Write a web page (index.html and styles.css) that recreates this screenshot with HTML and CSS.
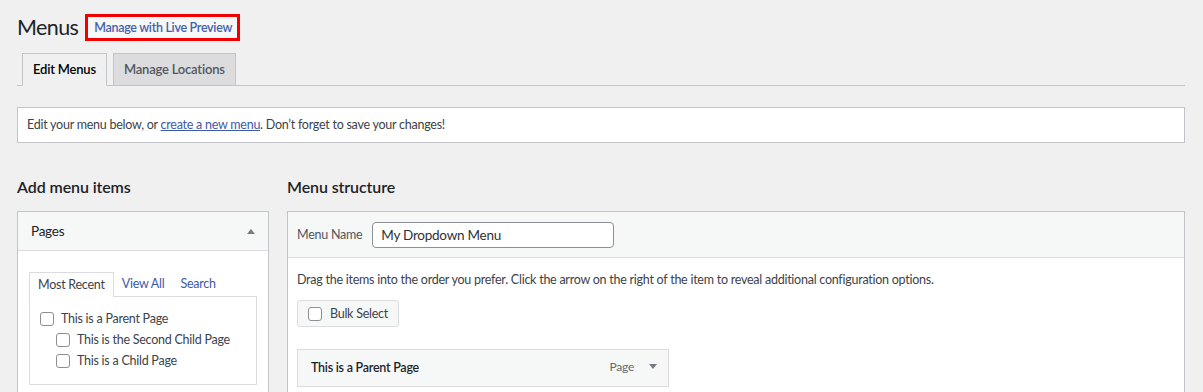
FILE: index.html
```html
<!DOCTYPE html>
<html lang="en">
<head>
<meta charset="utf-8">
<title>Menus</title>
<link rel="stylesheet" href="styles.css">
</head>
<body>
<div class="wrap">
  <div class="title-row">
    <h1 class="page-title">Menus</h1>
    <span class="highlight"><a class="title-action" href="#">Manage with Live Preview</a></span>
  </div>

  <nav class="nav-tabs">
    <a class="nav-tab active" href="#">Edit Menus</a>
    <a class="nav-tab" href="#">Manage Locations</a>
  </nav>

  <div class="notice">Edit your menu below, or <a href="#">create a new menu</a>. Don’t forget to save your changes!</div>

  <div class="columns">
    <section class="col-left">
      <h2 class="col-title">Add menu items</h2>
      <div class="box">
        <div class="box-head">
          <span>Pages</span>
          <span class="tri-up"></span>
        </div>
        <div class="box-body">
          <div class="mini-tabs">
            <span class="mini-tab active">Most Recent</span>
            <a class="mini-tab" href="#">View All</a>
            <a class="mini-tab" href="#">Search</a>
          </div>
          <div class="mini-panel">
            <label class="check-row"><span class="cb"></span>This is a Parent Page</label>
            <label class="check-row child"><span class="cb"></span>This is the Second Child Page</label>
            <label class="check-row child"><span class="cb"></span>This is a Child Page</label>
          </div>
        </div>
      </div>
    </section>

    <section class="col-right">
      <h2 class="col-title">Menu structure</h2>
      <div class="box">
        <div class="menu-head">
          <span class="menu-label">Menu Name</span>
          <span class="text-input">My Dropdown Menu</span>
        </div>
        <div class="menu-body">
          <p class="hint">Drag the items into the order you prefer. Click the arrow on the right of the item to reveal additional configuration options.</p>
          <span class="bulk-btn"><span class="cb"></span>Bulk Select</span>
          <div class="menu-item">
            <span class="item-title">This is a Parent Page</span>
            <span class="item-meta">Page <span class="tri-down"></span></span>
          </div>
        </div>
      </div>
    </section>
  </div>
</div>
</body>
</html>
```

FILE: styles.css
```css
* { box-sizing: border-box; }

html, body {
  margin: 0;
  padding: 0;
  background: #f0f0f1;
}

body {
  font-family: "Segoe UI", Lato, "Liberation Sans", sans-serif;
  font-size: 12.5px;
  letter-spacing: -0.25px;
  line-height: 18px;
  color: #3c434a;
  height: 392px;
  overflow: hidden;
}

a { color: #3d5aa6; }

.wrap {
  padding: 14px 18px 0 17px;
}

.title-row {
  display: flex;
  align-items: center;
  gap: 7px;
  height: 27px;
}

.page-title {
  margin: 0;
  font-size: 21.5px;
  letter-spacing: -0.6px;
  font-weight: 400;
  line-height: 27px;
  color: #1d2327;
}

.highlight {
  display: flex;
  border: 3px solid #f20000;
  height: 27px;
}

.title-action {
  display: block;
  background: #f6f7f7;
  padding: 0 5px 0 6px;
  font-size: 12.5px;
  letter-spacing: -0.3px;
  font-weight: 600;
  line-height: 21px;
  text-decoration: none;
  color: #4560ab;
}

.nav-tabs {
  display: flex;
  margin-top: 12px;
  border-bottom: 1px solid #c3c4c7;
  padding-left: 5px;
  gap: 6px;
  height: 33px;
}

.nav-tab {
  display: block;
  padding: 5px 10px 5px;
  font-size: 13px;
  letter-spacing: -0.2px;
  font-weight: 600;
  line-height: 20px;
  border: 1px solid #c3c4c7;
  background: #dcdcde;
  color: #50575e;
  text-decoration: none;
  height: 33px;
}

.nav-tab.active {
  background: #f0f0f1;
  color: #000;
  border-bottom-color: #f0f0f1;
}

.notice {
  margin-top: 21px;
  background: #fff;
  border: 1px solid #c3c4c7;
  padding: 8px 9px;
  height: 36px;
}

.columns {
  display: flex;
  gap: 18px;
  margin-top: 32px;
}

.col-left { width: 252px; flex: none; }
.col-right { flex: 1; }

.col-title {
  margin: 0 0 12px;
  font-size: 16px;
  letter-spacing: -0.1px;
  font-weight: 600;
  line-height: 24px;
  color: #1d2327;
}

.box {
  background: #fff;
  border: 1px solid #c3c4c7;
}

.box-head {
  display: flex;
  justify-content: space-between;
  align-items: center;
  background: #f6f7f7;
  border-bottom: 1px solid #dcdcde;
  height: 39px;
  padding: 0 13px 0 13px;
  font-size: 13.5px;
  color: #1d2327;
}

.tri-up {
  width: 0;
  height: 0;
  border-left: 4px solid transparent;
  border-right: 4px solid transparent;
  border-bottom: 5px solid #787c82;
}

.box-body {
  padding: 21px 11px 30px;
}

.mini-tabs {
  display: flex;
  align-items: flex-end;
  height: 24px;
}

.mini-tab {
  display: block;
  padding: 2px 8px 3px 8px;
  line-height: 19px;
  text-decoration: none;
  color: #3d5aa6;
}

.mini-tab.active {
  background: #fff;
  border: 1px solid #dcdcde;
  border-bottom: 0;
  color: #3c434a;
  height: 25px;
  position: relative;
  z-index: 1;
  margin-bottom: -1px;
}

.mini-panel {
  border: 1px solid #dcdcde;
  padding: 11px 10px 13px;
  display: flex;
  flex-direction: column;
}

.check-row {
  display: flex;
  align-items: center;
  gap: 7px;
  height: 21px;
  color: #3c434a;
}

.check-row.child { padding-left: 16px; }

.cb {
  display: inline-block;
  width: 14px;
  height: 14px;
  border: 1px solid #8c8f94;
  border-radius: 3px;
  background: #fff;
  flex: none;
}

.menu-head {
  display: flex;
  align-items: center;
  gap: 10px;
  background: #f6f7f7;
  border-bottom: 1px solid #dcdcde;
  height: 46px;
  padding: 0 9px;
}

.menu-label { color: #50575e; }

.text-input {
  display: flex;
  align-items: center;
  width: 242px;
  height: 26px;
  border: 1px solid #8c8f94;
  border-radius: 4px;
  background: #fff;
  padding: 0 8px;
  font-size: 13.5px;
  color: #2c3338;
}

.menu-body {
  padding: 13px 9px 10px;
}

.hint {
  margin: 0 0 11px;
}

.bulk-btn {
  display: inline-flex;
  align-items: center;
  gap: 8px;
  height: 27px;
  padding: 0 10px 0 10px;
  background: #f6f7f7;
  border: 1px solid #dcdcde;
  border-radius: 3px;
  color: #3c434a;
}

.menu-item {
  display: flex;
  justify-content: space-between;
  align-items: center;
  width: 372px;
  height: 38px;
  margin-top: 22px;
  background: #f6f7f7;
  border: 1px solid #dcdcde;
  padding: 0 11px 0 13px;
}

.item-title {
  font-weight: 600;
  color: #1d2327;
}

.item-meta {
  display: flex;
  align-items: center;
  gap: 15px;
  font-size: 12px;
  color: #646970;
  margin-top: -3px;
}

.tri-down {
  width: 0;
  height: 0;
  border-left: 4px solid transparent;
  border-right: 4px solid transparent;
  border-top: 5px solid #787c82;
}
```
